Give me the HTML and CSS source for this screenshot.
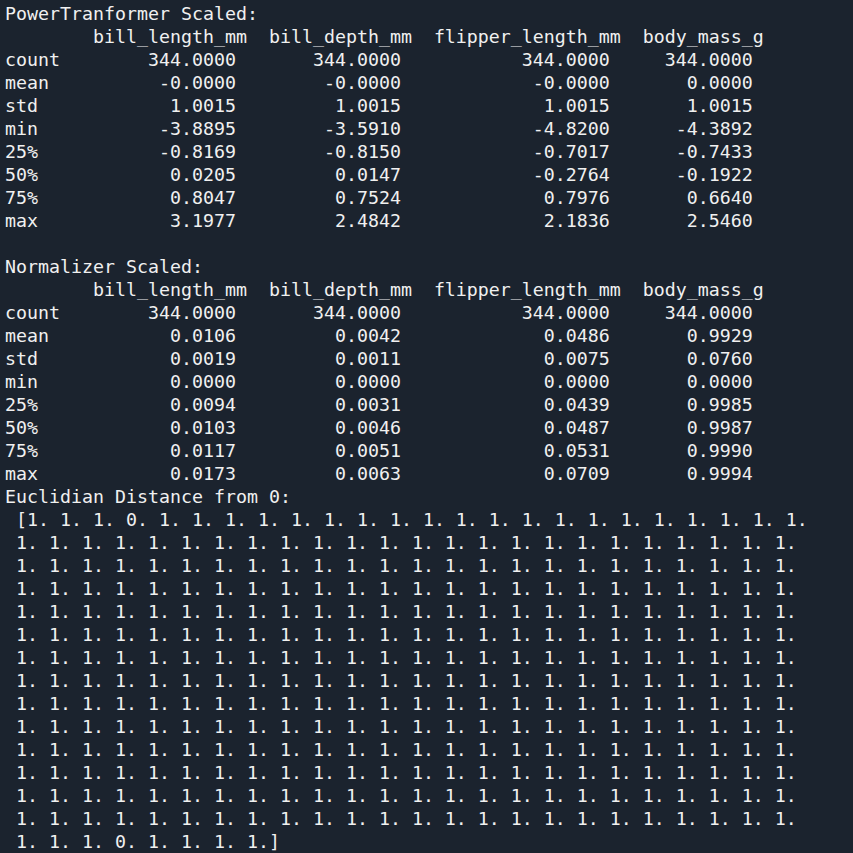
FILE: index.html
```html
<!DOCTYPE html>
<html>
<head>
<meta charset="utf-8">
<link rel="stylesheet" href="styles.css">
</head>
<body>
<main class="terminal">
<pre class="out">PowerTranformer Scaled:
        bill_length_mm  bill_depth_mm  flipper_length_mm  body_mass_g
count        344.0000       344.0000           344.0000     344.0000
mean          -0.0000        -0.0000            -0.0000       0.0000
std            1.0015         1.0015             1.0015       1.0015
min           -3.8895        -3.5910            -4.8200      -4.3892
25%           -0.8169        -0.8150            -0.7017      -0.7433
50%            0.0205         0.0147            -0.2764      -0.1922
75%            0.8047         0.7524             0.7976       0.6640
max            3.1977         2.4842             2.1836       2.5460

Normalizer Scaled:
        bill_length_mm  bill_depth_mm  flipper_length_mm  body_mass_g
count        344.0000       344.0000           344.0000     344.0000
mean           0.0106         0.0042             0.0486       0.9929
std            0.0019         0.0011             0.0075       0.0760
min            0.0000         0.0000             0.0000       0.0000
25%            0.0094         0.0031             0.0439       0.9985
50%            0.0103         0.0046             0.0487       0.9987
75%            0.0117         0.0051             0.0531       0.9990
max            0.0173         0.0063             0.0709       0.9994
Euclidian Distance from 0:
 [1. 1. 1. 0. 1. 1. 1. 1. 1. 1. 1. 1. 1. 1. 1. 1. 1. 1. 1. 1. 1. 1. 1. 1.
 1. 1. 1. 1. 1. 1. 1. 1. 1. 1. 1. 1. 1. 1. 1. 1. 1. 1. 1. 1. 1. 1. 1. 1.
 1. 1. 1. 1. 1. 1. 1. 1. 1. 1. 1. 1. 1. 1. 1. 1. 1. 1. 1. 1. 1. 1. 1. 1.
 1. 1. 1. 1. 1. 1. 1. 1. 1. 1. 1. 1. 1. 1. 1. 1. 1. 1. 1. 1. 1. 1. 1. 1.
 1. 1. 1. 1. 1. 1. 1. 1. 1. 1. 1. 1. 1. 1. 1. 1. 1. 1. 1. 1. 1. 1. 1. 1.
 1. 1. 1. 1. 1. 1. 1. 1. 1. 1. 1. 1. 1. 1. 1. 1. 1. 1. 1. 1. 1. 1. 1. 1.
 1. 1. 1. 1. 1. 1. 1. 1. 1. 1. 1. 1. 1. 1. 1. 1. 1. 1. 1. 1. 1. 1. 1. 1.
 1. 1. 1. 1. 1. 1. 1. 1. 1. 1. 1. 1. 1. 1. 1. 1. 1. 1. 1. 1. 1. 1. 1. 1.
 1. 1. 1. 1. 1. 1. 1. 1. 1. 1. 1. 1. 1. 1. 1. 1. 1. 1. 1. 1. 1. 1. 1. 1.
 1. 1. 1. 1. 1. 1. 1. 1. 1. 1. 1. 1. 1. 1. 1. 1. 1. 1. 1. 1. 1. 1. 1. 1.
 1. 1. 1. 1. 1. 1. 1. 1. 1. 1. 1. 1. 1. 1. 1. 1. 1. 1. 1. 1. 1. 1. 1. 1.
 1. 1. 1. 1. 1. 1. 1. 1. 1. 1. 1. 1. 1. 1. 1. 1. 1. 1. 1. 1. 1. 1. 1. 1.
 1. 1. 1. 1. 1. 1. 1. 1. 1. 1. 1. 1. 1. 1. 1. 1. 1. 1. 1. 1. 1. 1. 1. 1.
 1. 1. 1. 1. 1. 1. 1. 1. 1. 1. 1. 1. 1. 1. 1. 1. 1. 1. 1. 1. 1. 1. 1. 1.
 1. 1. 1. 0. 1. 1. 1. 1.]</pre>
</main>
</body>
</html>
```

FILE: styles.css
```css
html, body {
  margin: 0;
  padding: 0;
  background: #1b232e;
  overflow: hidden;
}

.terminal {
  width: 853px;
  height: 853px;
  box-sizing: border-box;
  padding: 2px 0 0 5px;
  background: #1b232e;
}

.out {
  margin: 0;
  font-family: "DejaVu Sans Mono", "Liberation Mono", monospace;
  font-size: 18.27px;
  line-height: 23px;
  color: #f0f0f0;
  white-space: pre;
}
```
